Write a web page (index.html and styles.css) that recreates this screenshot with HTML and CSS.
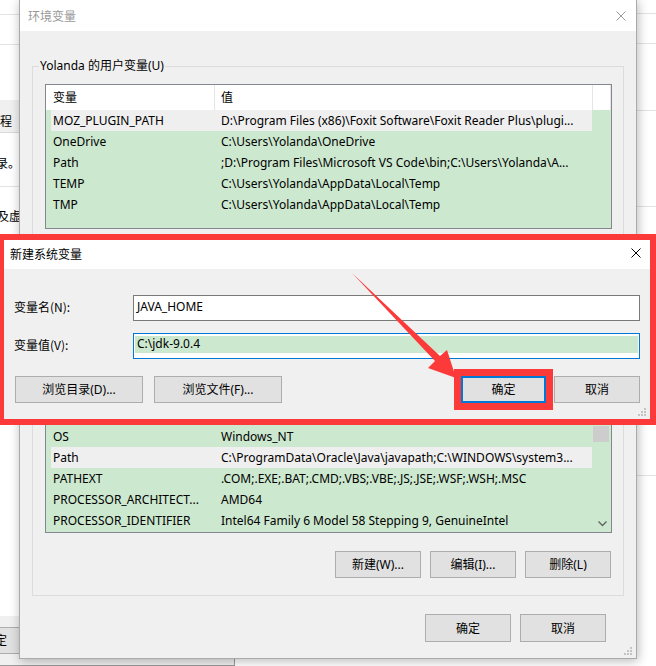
FILE: index.html
```html
<!DOCTYPE html>
<html lang="zh-CN">
<head>
  <meta charset="UTF-8">
  <title>环境变量</title>
  <link rel="stylesheet" href="styles.css">
</head>
<body>

  <!-- Hintergrund: Systemeigenschaften -->
  <div class="sysprops">
    <div class="sp-line sp-l1"></div>
    <div class="sp-line sp-l2"></div>
    <div class="sp-blank"></div>
    <div class="sp-tabs"><span>远程</span></div>
    <div class="sp-text sp-t1">你必须作为管理员登录。</div>
    <div class="sp-text sp-t2">内存使用，以及虚拟内存</div>
    <div class="sp-fill"></div>
    <div class="sp-foot"><button class="btn sp-ok">确定</button></div>
  </div>

  <!-- Hintergrund rechts -->
  <div class="rightwin">
    <div class="rw-line rw-1"></div>
    <div class="rw-line rw-2"></div>
    <div class="rw-line rw-3"></div>
    <div class="rw-line rw-4"></div>
    <div class="rw-line rw-5"></div>
  </div>

  <!-- Fenster: Umgebungsvariablen -->
  <div class="envwin">
    <div class="titlebar inactive">
      <span class="title">环境变量</span>
      <svg class="close" width="10" height="10" viewBox="0 0 10 10"><path d="M0.5 0.5L9.5 9.5M9.5 0.5L0.5 9.5" /></svg>
    </div>

    <div class="win-body">
      <div class="group user-group">
        <span class="group-title">Yolanda 的用户变量(U)</span>
        <div class="list user-list">
          <div class="list-head"><span>变量</span><span>值</span><span></span></div>
          <div class="row sel"><span>MOZ_PLUGIN_PATH</span><span>D:\Program Files (x86)\Foxit Software\Foxit Reader Plus\plugi...</span></div>
          <div class="row"><span>OneDrive</span><span>C:\Users\Yolanda\OneDrive</span></div>
          <div class="row"><span>Path</span><span>;D:\Program Files\Microsoft VS Code\bin;C:\Users\Yolanda\A...</span></div>
          <div class="row"><span>TEMP</span><span>C:\Users\Yolanda\AppData\Local\Temp</span></div>
          <div class="row"><span>TMP</span><span>C:\Users\Yolanda\AppData\Local\Temp</span></div>
        </div>
      </div>

      <!-- oberer Teil liegt unter dem Dialog, daher leer -->
      <div class="group sys-group">
        <div class="list sys-list">
          <div class="list-main">
            <div class="list-head"><span></span><span></span></div>
            <div class="row"></div>
            <div class="row"></div>
            <div class="row"></div>
            <div class="row"></div>
            <div class="row"></div>
            <div class="row"></div>
            <div class="row"><span>OS</span><span>Windows_NT</span></div>
            <div class="row sel"><span>Path</span><span>C:\ProgramData\Oracle\Java\javapath;C:\WINDOWS\system3...</span></div>
            <div class="row"><span>PATHEXT</span><span>.COM;.EXE;.BAT;.CMD;.VBS;.VBE;.JS;.JSE;.WSF;.WSH;.MSC</span></div>
            <div class="row"><span>PROCESSOR_ARCHITECT...</span><span>AMD64</span></div>
            <div class="row"><span>PROCESSOR_IDENTIFIER</span><span>Intel64 Family 6 Model 58 Stepping 9, GenuineIntel</span></div>
          </div>
          <div class="vscroll">
            <div class="sb-arrow"></div>
            <div class="sb-track"><div class="sb-thumb"></div></div>
            <div class="sb-arrow">
              <svg width="9" height="6" viewBox="0 0 9 6"><path d="M0.5 0.5L4.5 4.5L8.5 0.5" /></svg>
            </div>
          </div>
        </div>
        <div class="btn-row group-btns">
          <button class="btn">新建(W)...</button>
          <button class="btn">编辑(I)...</button>
          <button class="btn">删除(L)</button>
        </div>
      </div>

      <div class="btn-row main-btns">
        <button class="btn">确定</button>
        <button class="btn">取消</button>
      </div>
    </div>

    <svg class="grip" width="9" height="9" viewBox="0 0 9 9">
      <rect x="6" y="0" width="2" height="2" /><rect x="3" y="3" width="2" height="2" /><rect x="6" y="3" width="2" height="2" />
      <rect x="0" y="6" width="2" height="2" /><rect x="3" y="6" width="2" height="2" /><rect x="6" y="6" width="2" height="2" />
    </svg>
  </div>

  <!-- Dialog: Neue Systemvariable (rot markiert) -->
  <div class="dlg">
    <div class="titlebar">
      <span class="title">新建系统变量</span>
      <svg class="close" width="10" height="10" viewBox="0 0 10 10"><path d="M0.5 0.5L9.5 9.5M9.5 0.5L0.5 9.5" /></svg>
    </div>
    <div class="dlg-body">
      <div class="field">
        <label>变量名(N):</label>
        <div class="input">JAVA_HOME</div>
      </div>
      <div class="field second">
        <label>变量值(V):</label>
        <div class="input focus"><span class="selection">C:\jdk-9.0.4</span></div>
      </div>
      <div class="btn-row dlg-btns">
        <button class="btn wide">浏览目录(D)...</button>
        <button class="btn wide">浏览文件(F)...</button>
        <button class="btn ok">确定</button>
        <button class="btn">取消</button>
      </div>
    </div>
    <svg class="grip" width="9" height="9" viewBox="0 0 9 9">
      <rect x="6" y="0" width="2" height="2" /><rect x="3" y="3" width="2" height="2" /><rect x="6" y="3" width="2" height="2" />
      <rect x="0" y="6" width="2" height="2" /><rect x="3" y="6" width="2" height="2" /><rect x="6" y="6" width="2" height="2" />
    </svg>
  </div>

  <!-- roter Pfeil -->
  <svg class="arrow" width="656" height="666" viewBox="0 0 656 666">
    <polygon points="352,273 440,356 447,350 456,378 428,368 435,361" />
  </svg>

</body>
</html>
```

FILE: styles.css
```css
/* Grundlayout */
body {
  margin: 0;
  width: 656px;
  height: 666px;
  overflow: hidden;
  position: relative;
  background: #fff;
  font-family: "Noto Sans", "Noto Sans CJK SC", sans-serif;
  font-size: 12px;
  color: #000;
}

/* Hintergrundfenster links */
.sysprops {
  position: absolute;
  left: -400px;
  top: -1px;
  width: 635px;
  height: 667px;
  box-sizing: border-box;
  border: 1px solid #9a9a9a;
  background: #fff;
  display: flex;
  flex-direction: column;
}

.sp-line {
  border-bottom: 1px solid #e3e3e3;
}

.sp-l1 { height: 14px; }
.sp-l2 { height: 29px; }
.sp-blank { height: 55px; }

.sp-tabs {
  height: 33px;
  box-sizing: border-box;
  background: #f0f0f0;
  border-bottom: 1px solid #d9d9d9;
  display: flex;
  justify-content: flex-end;
  align-items: center;
  padding: 8px 222px 0 0;
  font-family: "Noto Sans CJK SC", sans-serif;
}

.sp-text {
  font-family: "Noto Sans CJK SC", sans-serif;
  text-align: right;
  line-height: 20px;
}

.sp-t1 {
  height: 54px;
  box-sizing: border-box;
  padding: 20px 214px 0 0;
  border-bottom: 1px solid #e3e3e3;
}

.sp-t2 {
  padding: 19px 177px 0 0;
}

.sp-fill { flex: 1; }

.sp-foot {
  height: 49px;
  box-sizing: border-box;
  background: #f0f0f0;
  display: flex;
  justify-content: flex-end;
  padding: 11px 196px 9px 0;
}

.sp-ok {
  width: 86px;
  height: 28px;
}

/* Hintergrundfenster rechts */
.rightwin {
  position: absolute;
  left: 630px;
  top: -1px;
  width: 120px;
  height: 700px;
  background: #fff;
}

.rw-line { border-bottom: 1px solid #e3e3e3; }
.rw-1 { height: 14px; }
.rw-2 { height: 29px; }
.rw-3 { height: 66px; }
.rw-4 { height: 95px; }
.rw-5 { height: 268px; }

/* Fenster allgemein */
.envwin {
  position: absolute;
  left: 19px;
  top: -1px;
  width: 618px;
  height: 660px;
  box-sizing: border-box;
  border: 1px solid #aaa;
  background: #f0f0f0;
  display: flex;
  flex-direction: column;
  box-shadow: 1px 2px 10px rgba(0, 0, 0, 0.28);
}

.titlebar {
  height: 31px;
  flex-shrink: 0;
  box-sizing: border-box;
  background: #fff;
  display: flex;
  align-items: center;
  justify-content: space-between;
  padding: 0 10px 0 8px;
  font-family: "Noto Sans CJK SC", sans-serif;
}

.titlebar .close path {
  stroke: #000;
  stroke-width: 1;
  fill: none;
}

.titlebar.inactive {
  color: #999;
}

.titlebar.inactive .close path {
  stroke: #999;
}

.win-body {
  flex: 1;
  display: flex;
  flex-direction: column;
  padding: 35px 12px 16px 12px;
}

/* Gruppenrahmen */
.group {
  position: relative;
  border: 1px solid #dcdcdc;
  padding: 17px 11px 17px 12px;
}

.user-group {
  padding-bottom: 8px;
}

.sys-group {
  margin-top: 18px;
}

.group-title {
  position: absolute;
  top: -10px;
  left: 6px;
  padding: 0 1px;
  line-height: 17px;
  background: #f0f0f0;
}

/* Listen */
.list {
  border: 1px solid #828790;
  background: #cce8cf;
  box-sizing: border-box;
}

.user-list {
  height: 145px;
}

.list-head {
  height: 25px;
  background: #fff;
  display: grid;
  grid-template-columns: 169px 378px 1fr;
  line-height: 25px;
}

.list-head span {
  border-right: 1px solid #e5e5e5;
  padding-left: 7px;
}

.list-head span + span {
  padding-left: 6px;
}

.row {
  height: 21px;
  line-height: 21px;
  margin-left: 5px;
  width: 541px;
  display: grid;
  grid-template-columns: 168px 1fr;
  white-space: nowrap;
  overflow: hidden;
}

.row span {
  padding-left: 2px;
}

.row.sel {
  background: #efefef;
}

.sys-list {
  display: flex;
}

.list-main {
  flex: 1;
  padding-bottom: 1px;
}

.sys-list .list-head {
  grid-template-columns: 169px 1fr;
}

.sys-list .list-head span:last-child {
  border-right: none;
}

/* Bildlaufleiste */
.vscroll {
  width: 18px;
  display: flex;
  flex-direction: column;
  background: #cce8cf;
}

.sb-arrow {
  height: 17px;
  display: flex;
  align-items: center;
  justify-content: center;
}

.sb-arrow path {
  stroke: #606060;
  stroke-width: 1.3;
  fill: none;
}

.sb-track {
  flex: 1;
  padding-top: 134px;
}

.sb-thumb {
  height: 16px;
  width: 16px;
  background: #cdcdcd;
}

/* Schaltflächen */
.btn-row {
  display: flex;
  justify-content: flex-end;
}

.btn {
  width: 86px;
  height: 27px;
  padding: 0 0 1px 0;
  border: 1px solid #adadad;
  background: #e1e1e1;
  font-family: "Noto Sans", "Noto Sans CJK SC", sans-serif;
  font-size: 12px;
  color: #000;
}

.group-btns {
  margin-top: 18px;
  margin-right: 1px;
  gap: 9px;
}

.main-btns {
  margin-top: 18px;
  margin-right: 18px;
  gap: 9px;
}

.main-btns .btn {
  height: 28px;
}

.grip {
  position: absolute;
  right: 3px;
  bottom: 2px;
}

.grip rect {
  fill: #c4c4c4;
}

/* Dialog Neue Systemvariable */
.dlg {
  position: absolute;
  left: -2px;
  top: 234px;
  width: 658px;
  height: 191px;
  box-sizing: border-box;
  border: 6px solid #fc3a3a;
  background: #f0f0f0;
  display: flex;
  flex-direction: column;
}

.dlg .titlebar {
  height: 29px;
  padding: 0 9px 3px 6px;
}

.dlg-body {
  padding: 26px 10px 0 10px;
}

.field {
  display: flex;
  align-items: center;
}

.field.second {
  margin-top: 12px;
}

.field label {
  width: 119px;
  padding-bottom: 3px;
  font-family: "Noto Sans CJK SC", sans-serif;
}

.input {
  flex: 1;
  height: 26px;
  box-sizing: border-box;
  border: 1px solid #7a7a7a;
  background: #fff;
  padding-left: 3px;
  line-height: 22px;
}

.input.focus {
  border-color: #0078d7;
  padding: 2px 1px 5px 1px;
  line-height: 16px;
}

.selection {
  display: block;
  height: 17px;
  background: #cce8cf;
  padding-left: 2px;
}

.dlg-btns {
  margin-top: 17px;
  justify-content: flex-start;
}

.dlg-btns .wide {
  width: 128px;
  margin-left: 1px;
}

.dlg-btns .wide + .wide {
  margin-left: 11px;
}

.dlg-btns .ok {
  margin-left: auto;
  margin-right: 8px;
  width: 85px;
  border-color: #0078d7;
  box-shadow: inset 0 0 0 1px #0078d7, 0 0 0 7px #fc3a3a;
}

/* Pfeil */
.arrow {
  position: absolute;
  left: 0;
  top: 0;
  pointer-events: none;
}

.arrow polygon {
  fill: #fc3a3a;
}
```
